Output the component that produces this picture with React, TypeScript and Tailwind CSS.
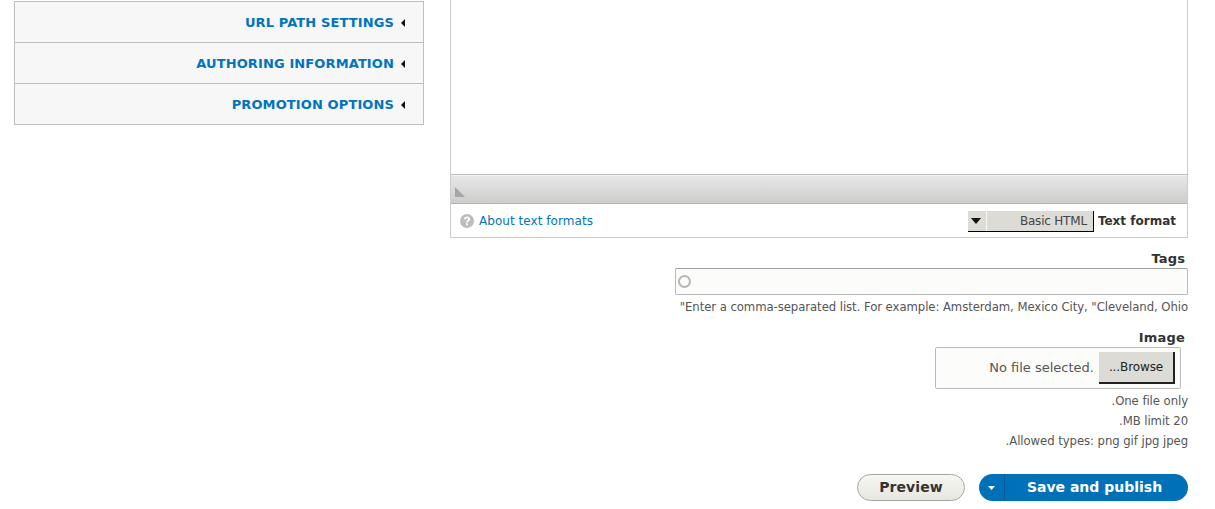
const sections = ["URL path settings", "Authoring information", "Promotion options"];

function ArrowLeft() {
  return (
    <svg width="4" height="8" viewBox="0 0 4 8" className="block">
      <path d="M4 0v8L0 4z" fill="#111" />
    </svg>
  );
}

function HelpIcon() {
  return (
    <svg width="14" height="14" viewBox="0 0 14 14" className="block shrink-0">
      <circle cx="7" cy="7" r="7" fill="#bdbdbd" />
      <path d="M3.900 5.200C4 3.300 5.300 2.400 7.100 2.400c1.800 0 3 1 3 2.500 0 1.200-.7 1.800-1.400 2.300-.6.400-.9.700-.9 1.400H6.100c0-1.200.3-1.800 1.100-2.400.6-.4.900-.7.900-1.200 0-.6-.4-.9-1-.9-.7 0-1.100.4-1.200 1.100z" fill="#fff" />
      <rect x="6.100" y="9.300" width="1.800" height="1.900" fill="#fff" />
    </svg>
  );
}

export default function App() {
  return (
    <div
      dir="rtl"
      className="flex h-[509px] items-start gap-[26px] overflow-hidden bg-white pr-[27px] font-['DejaVu_Sans',sans-serif] text-[#333]"
    >
      <main className="w-[738px] shrink-0">
        <div className="border border-t-0 border-[#ccc]">
          <div className="h-[175px] border-b border-[#bcbcbc] bg-white" />
          <div className="flex h-[29px] items-end border-b border-[#b4b4b4] bg-gradient-to-b from-[#e8e8e8] to-[#cdcecb] shadow-[inset_0_1px_0_#f4f4f4]">
            <svg width="10" height="10" viewBox="0 0 10 10" className="mb-[6px] mr-auto ml-[4px] block">
              <path d="M0 0l10 10H0z" fill="#a5a5a5" />
            </svg>
          </div>
          <div className="flex h-[33px] items-center justify-between pl-[9px] pr-[11px] pt-[1px]">
            <div className="flex items-center gap-[4px] text-[12px] font-bold leading-none">
              <span>Text format</span>
              <div className="flex h-[21px] w-[126px] items-center justify-between border-r border-b border-black bg-[#dcdbd6] text-[12px] font-normal text-[#444]">
                <span dir="ltr" className="mr-[6px] tracking-[-0.2px]">Basic HTML</span>
                <div className="flex h-full w-[19px] items-center justify-center border-r border-[#f6f6f3] pr-[1px]">
                  <svg width="10" height="6" viewBox="0 0 10 6" className="block">
                    <path d="M0 0h10L5 6z" fill="#111" />
                  </svg>
                </div>
              </div>
            </div>
            <div className="flex items-center gap-[5px]">
              <span className="text-[12px] leading-none tracking-[0.05px] text-[#0074bd]">About text formats</span>
              <HelpIcon />
            </div>
          </div>
        </div>

        <div className="mt-[13px]">
          <div className="mr-[3px] text-[13px] font-bold leading-[15px] tracking-[0.1px]">Tags</div>
          <div className="mt-[2px] flex h-[27px] w-[513px] items-center justify-end rounded-[2px] border border-[#b8b8b8] border-t-[#a0a0a0] bg-[#fcfcfa] pl-[2px]">
            <div className="h-[13px] w-[13px] rounded-full border-2 border-[#b5b5b5]" />
          </div>
          <div className="mt-[3px] whitespace-nowrap text-[11.7px] leading-[18px] tracking-[-0.07px] text-[#555]">
            Enter a comma-separated list. For example: Amsterdam, Mexico City, "Cleveland, Ohio"
          </div>
        </div>

        <div className="mt-[14px]">
          <div className="mr-[3px] text-[13px] font-bold leading-[15px] tracking-[0.2px]">Image</div>
          <div className="mt-[2px] mr-[7px] flex h-[42px] w-[246px] items-center gap-[5px] rounded-[2px] border border-[#bbb] bg-[#fcfcfa] pr-[5px]">
            <div className="flex h-[32px] w-[76px] items-center justify-center border-r-2 border-b-2 border-[#222] bg-[#dcdbd6] text-[12px] tracking-[-0.1px] text-[#222]">
              Browse...
            </div>
            <span dir="ltr" className="pb-[1px] text-[13px] text-[#555]">No file selected.</span>
          </div>
          <div className="mt-[2px] text-[11.7px] leading-[20px] tracking-[-0.07px] text-[#555]">
            <p>One file only.</p>
            <p>20 MB limit.</p>
            <p>Allowed types: png gif jpg jpeg.</p>
          </div>
        </div>

        <div className="mt-[23px] flex gap-[14px]">
          <div className="flex h-[27px] w-[209px] overflow-hidden rounded-full bg-[#0071b8] text-[14px] font-bold text-white">
            <div className="flex flex-1 items-center justify-center pr-[4px]">Save and publish</div>
            <div className="flex w-[26px] items-center justify-center border-r border-[#0a5d94]">
              <svg width="7" height="4" viewBox="0 0 7 4" className="block">
                <path d="M0 0h7L3.500 4z" fill="#fff" />
              </svg>
            </div>
          </div>
          <div className="flex h-[27px] w-[108px] items-center justify-center rounded-full border border-[#a6a6a0] bg-gradient-to-b from-[#f6f6f3] to-[#e7e7df] text-[14px] font-bold tracking-[0.1px] text-[#333]">
            Preview
          </div>
        </div>
      </main>

      <aside className="mt-[1px] w-[410px] shrink-0 border border-[#bebebe] bg-[#f7f7f7]">
        {sections.map((s, i) => (
          <div
            key={s}
            className={`flex items-center gap-[7px] pr-[18px] pt-[2px] ${i > 0 ? "h-[41px] border-t border-[#bebebe]" : "h-[40px]"}`}
          >
            <ArrowLeft />
            <span className="text-[13px] font-bold uppercase tracking-[0.12px] text-[#0074bd]">{s}</span>
          </div>
        ))}
      </aside>
    </div>
  );
}
